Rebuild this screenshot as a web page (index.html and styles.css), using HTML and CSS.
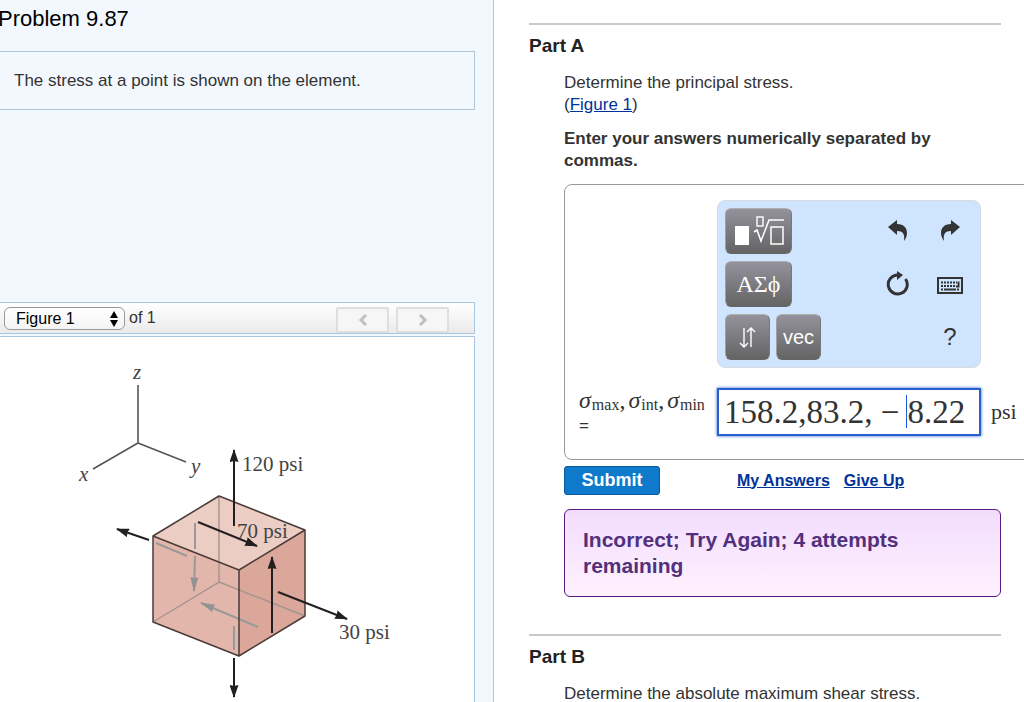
FILE: index.html
```
<!DOCTYPE html>
<html lang="en">
<head>
  <meta charset="UTF-8" />
  <meta name="viewport" content="width=device-width, initial-scale=1.0"/>
  <title>Problem 9.87</title>
  <link rel="stylesheet" href="styles.css">
</head>
<body>

<div class="page">

  <section class="left">
    <h1>Problem 9.87</h1>
    <p class="statement">The stress at a point is shown on the element.</p>

    <div class="figure-bar">
      <span class="select-wrap">
        <select id="figure" aria-label="Figure">
          <option>Figure 1</option>
        </select>
        <svg class="updown" width="8" height="16" viewBox="0 0 8 16" aria-hidden="true">
          <path d="M4 0 L8 7 H0 Z M0 9 H8 L4 16 Z"/>
        </svg>
      </span>
      <label for="figure">of 1</label>
      <div class="pager">
        <button type="button" aria-label="Previous figure" disabled>
          <svg width="10" height="12" viewBox="0 0 10 12"><path d="M8 1 L3 6 L8 11"/></svg>
        </button>
        <button type="button" aria-label="Next figure" disabled>
          <svg width="10" height="12" viewBox="0 0 10 12"><path d="M2 1 L7 6 L2 11"/></svg>
        </button>
      </div>
    </div>

    <div class="figure" id="figure1">
      <svg width="474" height="365" viewBox="0 337 474 365">
        <defs>
          <marker id="head" markerWidth="13" markerHeight="9" refX="12" refY="4.5" orient="auto" markerUnits="userSpaceOnUse">
            <path d="M0 0 L13 4.500 L0 9 L1 4.500 Z" fill="#231f20"/>
          </marker>
          <marker id="head-hidden" markerWidth="15" markerHeight="8" refX="14" refY="4" orient="auto" markerUnits="userSpaceOnUse">
            <path d="M0 0 L15 4 L0 8 L1 4 Z" fill="#929292"/>
          </marker>
        </defs>

        <!-- axes -->
        <path class="axis" d="M138 385 V443 L93 469 M138 443 L186 462"/>
        <text class="var" x="133" y="379">z</text>
        <text class="var" x="79" y="481">x</text>
        <text class="var" x="191" y="473">y</text>

        <!-- faces -->
        <path fill="#ebcdc4" d="M219 496 L305 530 L239 570 L153 536 Z"/>
        <path fill="#e2b6ab" d="M153 536 L239 570 V656 L153 622 Z"/>
        <path fill="#dba79a" d="M239 570 L305 530 V616 L239 656 Z"/>

        <!-- hidden edges and arrows -->
        <path class="hidden-edge" d="M219 496 V582 L153 622 M219 582 L305 616"/>
        <path class="hidden-line" d="M156 543 L187 556 M195 523 V549 M234 626 V650"/>
        <path class="hidden-line" d="M195 556 L194 591" marker-end="url(#head-hidden)"/>
        <path class="hidden-line" d="M258 627 L201 603" marker-end="url(#head-hidden)"/>

        <path class="edge" d="M219 496 L305 530 V616 L239 656 L153 622 V536 Z M153 536 L239 570 L305 530 M239 570 V656"/>

        <path class="arrow" d="M234 526 V450" marker-end="url(#head)"/>
        <path class="arrow" d="M198 522 L257 546" marker-end="url(#head)"/>
        <path class="arrow" d="M278 592 L347 619" marker-end="url(#head)"/>
        <path class="arrow" d="M272 633 V557" marker-end="url(#head)"/>
        <path class="arrow" d="M149 540 L117 529" marker-end="url(#head)"/>
        <path class="arrow" d="M234 658 V697" marker-end="url(#head)"/>

        <text x="242" y="471">120 psi</text>
        <text x="237" y="538">70 psi</text>
        <text x="339" y="639">30 psi</text>
      </svg>
    </div>
  </section>

  <section class="right">
    <div class="part">
      <h2>Part A</h2>
      <div class="part-body">
        <p>Determine the principal stress.<br>(<a href="#figure1">Figure 1</a>)</p>
        <p class="instructions">Enter your answers numerically separated by commas.</p>

        <div class="answer-box">
          <div class="keypad">
            <div class="keys">
              <button type="button" class="key wide" aria-label="Templates">
                <svg width="52" height="32" viewBox="0 0 52 32" fill="none" stroke="#fff">
                  <rect x="2" y="11" width="14" height="19" fill="#fff" stroke="none"/>
                  <rect x="24" y="2" width="6" height="9" stroke-width="1.4"/>
                  <path d="M21 17 L24 15 L28 26 L36 5 H51" stroke-width="1.6"/>
                  <rect x="38" y="12" width="12" height="17" stroke-width="1.5"/>
                </svg>
              </button>
              <button type="button" class="tool" aria-label="Undo">
                <svg width="20" height="22" viewBox="0 0 20 22"><path d="M0 7 L9 0 V4 C16 4 19 8 19 13 C19 16 18 18 16 21 C17 14 15 11 9 11 V15 Z"/></svg>
              </button>
              <button type="button" class="tool" aria-label="Redo">
                <svg width="20" height="22" viewBox="0 0 20 22"><path d="M20 7 L11 0 V4 C4 4 1 8 1 13 C1 16 2 18 4 21 C3 14 5 11 11 11 V15 Z"/></svg>
              </button>
            </div>
            <div class="keys">
              <button type="button" class="key wide greek">ΑΣϕ</button>
              <button type="button" class="tool" aria-label="Reset">
                <svg width="24" height="26" viewBox="0 0 24 26">
                  <path class="ring" d="M19.500 8 A9.500 9.500 0 1 1 12 4"/>
                  <path d="M11 0 L17 4 L11 9 Z"/>
                </svg>
              </button>
              <button type="button" class="tool" aria-label="Keyboard">
                <svg class="keyboard" width="26" height="20" viewBox="0 0 26 20">
                  <rect x="1" y="4" width="24" height="15"/>
                  <path d="M4 8.500 H20" stroke-dasharray="2 1"/>
                  <path d="M4 12 H19" stroke-dasharray="2 1"/>
                  <path d="M4 15.500 H6 M7 15.500 H19 M20 15.500 H22"/>
                  <path d="M21.500 7.500 V12.500 H19"/>
                </svg>
              </button>
            </div>
            <div class="keys">
              <button type="button" class="key" aria-label="Swap">
                <svg width="18" height="22" viewBox="0 0 18 22" fill="none" stroke="#fff" stroke-width="1.4">
                  <path d="M5 2 V21 M1 17 L5 21 L9 17 M12 21 V2 M8 6 L12 2 L16 6"/>
                </svg>
              </button>
              <button type="button" class="key vec">vec</button>
              <button type="button" class="tool help">?</button>
            </div>
          </div>

          <label class="sigma" for="answer"><i>σ</i><sub>max</sub><b>,</b><i>σ</i><sub>int</sub><b>,</b><i>σ</i><sub>min</sub><br><span class="equals">=</span></label>
          <div class="entry">
            <input type="text" id="answer" value="158.2,83.2, − 8.22">
            <span class="caret"></span>
          </div>
          <span class="unit">psi</span>
        </div>

        <div class="actions">
          <button type="button" class="submit">Submit</button>
          <a href="#">My Answers</a>
          <a href="#">Give Up</a>
        </div>

        <div class="feedback">Incorrect; Try Again; 4 attempts remaining</div>
      </div>
    </div>

    <div class="part">
      <h2>Part B</h2>
      <div class="part-body">
        <p>Determine the absolute maximum shear stress.</p>
      </div>
    </div>
  </section>

</div>

</body>
</html>
```
FILE: styles.css
```
* { box-sizing: border-box; }
body { margin: 0; font-family: "Liberation Sans", Arial, sans-serif; font-size: 17px; line-height: 22px; color: #333; background: #fff; overflow-x: hidden; }
h1, h2, p { margin: 0; }
a { color: #039; }
button { font-family: inherit; padding: 0; }

.page { display: grid; grid-template-columns: 247fr 265fr; min-height: 100vh; overflow: hidden; }

/* left pane */
.left { display: flex; flex-direction: column; background: #f3f8ff; border-right: 1px solid #b5c7db; padding-right: 18px; min-width: 0; }
h1 { font-size: 22px; line-height: 26px; font-weight: normal; color: #000; margin: 6px 0 19px -2px; }
.statement { border: 1px solid #b0c4d8; border-left: none; padding: 18px 14px 17px; margin-bottom: 192px; }
.figure-bar { display: flex; align-items: center; height: 32px; padding: 0 25px 0 4px; border: 1px solid #adc6df; border-left: none; background: linear-gradient(#fff, #eaeaea); font-size: 16px; }
.select-wrap { position: relative; display: flex; margin-right: 4px; }
select { appearance: none; width: 121px; height: 23px; padding: 0 11px; border: 1px solid #999; border-radius: 6px; background: linear-gradient(#fff, #f4f4f4); font-family: inherit; font-size: 16px; color: #000; }
.updown { position: absolute; right: 7px; top: 4px; pointer-events: none; }
.pager { display: flex; gap: 7px; margin-left: auto; padding-top: 3px; }
.pager button { display: flex; align-items: center; justify-content: center; width: 53px; height: 26px; border: 2px solid #dedede; border-radius: 2px; background: #f6f6f6; }
.pager path { fill: none; stroke: #c0c0c0; stroke-width: 3; }
.figure { flex: 1; margin-top: 2px; border: 1px solid #adc6df; border-left: none; border-bottom: none; background: #fff; }
.figure svg { display: block; }
.figure text { font-family: "Liberation Serif", serif; font-size: 21px; fill: #444; }
.figure .var { font-style: italic; }
.axis { fill: none; stroke: #555; stroke-width: 1.6; }
.edge { fill: none; stroke: #4a3b38; stroke-width: 1.5; stroke-linejoin: round; }
.hidden-edge { fill: none; stroke: #a39490; stroke-width: 1.4; }
.hidden-line { fill: none; stroke: #999; stroke-width: 2; }
.arrow { fill: none; stroke: #231f20; stroke-width: 2; }

/* right pane */
.right { padding: 23px 23px 0 35px; min-width: 0; }
.part { border-top: 2px solid #c8c8c8; padding-top: 10px; margin-bottom: 37px; }
.part:last-child { margin-bottom: 0; }
h2 { font-size: 19px; line-height: 22px; color: #222; margin-bottom: 15px; }
.part-body { padding-left: 35px; }
.part-body p { margin-bottom: 12px; }
.part-body .instructions { font-weight: bold; }

/* the box runs out past the right edge of the pane */
.answer-box { display: grid; grid-template-columns: 138px 264px auto; row-gap: 20px; margin-right: -60px; padding: 15px 14px 23px; border: 1px solid #999; border-radius: 8px; }
.keypad { grid-column: 2; display: flex; flex-direction: column; gap: 7px; padding: 7px; background: #cfe5ff; border: 1px solid #d8dce0; border-radius: 8px; }
.keys { display: flex; gap: 6px; height: 46px; }
.key { display: flex; align-items: center; justify-content: center; width: 45px; border: 1px solid #777; border-color: #b0b0b0 #777 #666 #a0a0a0; border-radius: 6px; background: linear-gradient(#94929c, #646464); color: #fff; }
.wide { width: 67px; }
.greek { font-family: "Liberation Serif", serif; font-size: 24px; }
.vec { font-size: 20px; }
.tool { display: flex; align-items: center; justify-content: center; width: 46px; border: none; background: none; color: #333; }
.tool path { fill: #333; }
.tool .ring { fill: none; stroke: #333; stroke-width: 3; }
.keyboard rect, .keyboard path { fill: none; stroke: #333; stroke-width: 2; }
.key + .tool { margin-left: auto; }
.help { font-size: 24px; }

.sigma { grid-column: 1; padding-top: 2px; font-family: "Liberation Serif", serif; font-size: 24px; line-height: 20px; white-space: nowrap; }
.sigma i { margin-right: 1px; }
.sigma b { margin-right: 3px; font-weight: normal; }
.sigma sub { font-size: 16px; line-height: 1; vertical-align: -2px; }
.equals { font-family: "Liberation Sans", sans-serif; font-size: 17px; line-height: 16px; }
.entry { position: relative; }
.entry input { display: block; width: 100%; height: 48px; padding: 0 5px; border: 2px solid #2a5fd0; box-shadow: 0 0 3px #2a5fd0; outline: none; font-family: "Liberation Serif", serif; font-size: 33px; color: #333; }
.caret { position: absolute; left: 189px; top: 7px; width: 1px; height: 33px; background: #1a56db; }
.unit { align-self: center; padding-left: 10px; font-family: "Liberation Serif", serif; font-size: 22px; }

.actions { display: flex; align-items: center; gap: 14px; margin: 6px 0 14px; font-size: 16px; font-weight: bold; }
.submit { width: 96px; height: 29px; margin-right: 63px; border: 1px solid #0a5a9c; border-radius: 3px; background: #0f7acb; color: #fff; font-size: 18px; font-weight: bold; }
.feedback { padding: 17px 18px; border: 1px solid #5c1a80; border-radius: 6px; background: linear-gradient(#f2dcfd, #fff2ff); color: #52307c; font-size: 21px; line-height: 26px; font-weight: bold; }
```
